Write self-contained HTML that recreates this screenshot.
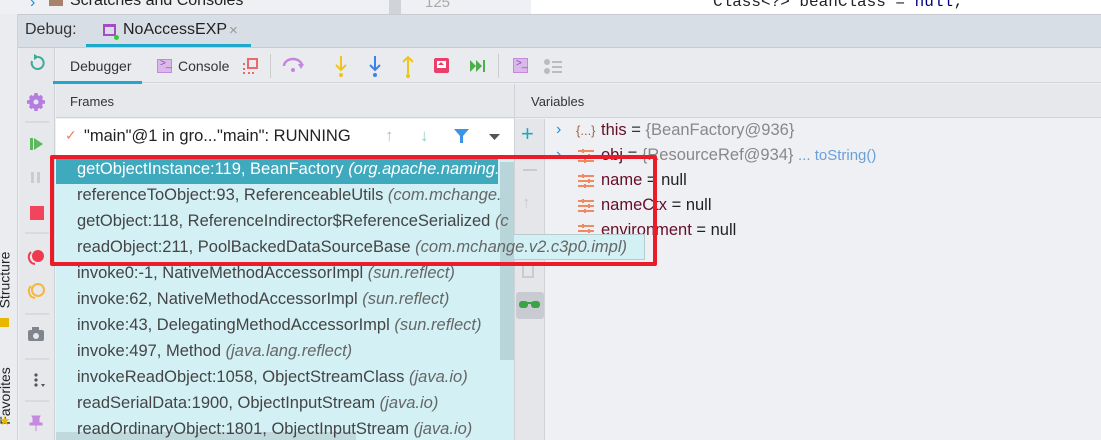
<!DOCTYPE html>
<html><head><meta charset="utf-8"><style>
*{margin:0;padding:0;box-sizing:border-box}
body{width:1101px;height:440px;overflow:hidden;position:relative;background:#eef0f4;font-family:"Liberation Sans",sans-serif;color:#222}
.a{position:absolute}
.t{position:absolute;white-space:nowrap}
.fr{position:absolute;left:21px;font-size:16.5px;color:#444;white-space:nowrap}
.fr i{color:#666}
</style></head><body>
<!-- top strip -->
<div class="a" style="left:0;top:0;width:395px;height:14px;background:#eef0f3"></div>
<div class="t" style="left:30px;top:-6px;font-size:16px;color:#1e8fd6">›</div>
<div class="a" style="left:49px;top:0;width:14px;height:6px;background:#a9826c"></div>
<div class="t" style="left:70px;top:-8px;font-size:16px;color:#222">Scratches and Consoles</div>
<div class="a" style="left:389px;top:0;width:12px;height:14px;background:#d0d3d8"></div>
<div class="a" style="left:401px;top:0;width:130px;height:14px;background:#eef0f3"></div>
<div class="t" style="left:425px;top:-6px;font-size:15px;color:#aaa">125</div>
<div class="a" style="left:531px;top:0;width:570px;height:14px;background:#fff"></div>
<div class="t" style="left:713px;top:-7px;font-size:16px;font-family:'Liberation Mono',monospace;color:#222">Class&lt;?&gt; beanClass = <span style="color:#000080">null</span>;</div>
<!-- debug header -->
<div class="a" style="left:18px;top:14px;width:1083px;height:34px;background:#d8dee6;border-top:1px solid #c8ccd2;border-bottom:1px solid #c8ccd2"></div>
<div class="t" style="left:25px;top:21px;font-size:16px;color:#333">Debug:</div>
<div class="a" style="left:103px;top:24px;width:13px;height:12px;border:2px solid #a64bc8;border-top-width:3px"></div>
<div class="a" style="left:114px;top:35px;width:5px;height:5px;border-radius:50%;background:#3c3"></div>
<div class="t" style="left:123px;top:21px;font-size:16px;color:#222">NoAccessEXP</div>
<div class="t" style="left:229px;top:22px;font-size:15px;color:#999">×</div>
<div class="a" style="left:86px;top:44px;width:165px;height:3px;background:#1ea8cc"></div>
<!-- left strips -->
<div class="a" style="left:0;top:14px;width:18px;height:426px;background:#eaecef;border-right:1px solid #d0d3d8"></div>
<div class="t" style="left:-24px;top:272px;font-size:14px;transform:rotate(-90deg);color:#222">Structure</div>
<div class="a" style="left:0;top:318px;width:9px;height:9px;background:#e8b800"></div>
<div class="t" style="left:-24px;top:388px;font-size:14px;transform:rotate(-90deg);color:#222">Favorites</div>
<div class="t" style="left:-1px;top:413px;font-size:13px;color:#e8b800">★</div>
<div class="a" style="left:19px;top:48px;width:36px;height:392px;background:#e6e8ec;border-right:1px solid #cfd2d7"></div>
<svg class="a" style="left:19px;top:48px" width="36" height="392">
<path d="M13 13 a6 6 0 1 0 6-4" fill="none" stroke="#3aaa99" stroke-width="2"/><path d="M15 6 l5 3 -5 3z" fill="#3aaa99"/>
<g fill="#b57de0"><circle cx="17" cy="54" r="7"/><g stroke="#b57de0" stroke-width="3.5"><line x1="17" y1="45" x2="17" y2="63"/><line x1="8" y1="54" x2="26" y2="54"/><line x1="11" y1="48" x2="23" y2="60"/><line x1="23" y1="48" x2="11" y2="60"/></g></g>
<circle cx="17" cy="54" r="2.5" fill="#e6e8ec"/>
<line x1="6" y1="74" x2="30" y2="74" stroke="#c8cbd0"/>
<rect x="11" y="90" width="3" height="12" fill="#5cb85c"/><path d="M15 90 l9 6 -9 6z" fill="#5cb85c"/>
<rect x="12" y="124" width="3" height="11" fill="#ccc"/><rect x="18" y="124" width="3" height="11" fill="#ccc"/>
<rect x="11" y="158" width="14" height="14" fill="#f0455c"/>
<line x1="6" y1="185" x2="30" y2="185" stroke="#c8cbd0"/>
<circle cx="19" cy="208" r="6" fill="#ee3b4f"/><path d="M12 204 a7 7 0 0 0 4 12" fill="none" stroke="#ee3b4f" stroke-width="2"/>
<circle cx="19" cy="242" r="6" fill="none" stroke="#f4b740" stroke-width="2"/><path d="M12 238 a7 7 0 0 0 4 12" fill="none" stroke="#f4b740" stroke-width="2"/>
<line x1="6" y1="266" x2="30" y2="266" stroke="#c8cbd0"/>
<rect x="9" y="282" width="16" height="11" rx="2" fill="#7f858c"/><rect x="13" y="279" width="7" height="4" fill="#7f858c"/><circle cx="17" cy="288" r="3" fill="#e6e8ec"/>
<line x1="6" y1="311" x2="30" y2="311" stroke="#c8cbd0"/>
<circle cx="17" cy="327" r="1.6" fill="#555"/><circle cx="17" cy="332" r="1.6" fill="#555"/><circle cx="17" cy="337" r="1.6" fill="#555"/><path d="M22 336 l4 0 -2 3z" fill="#555"/>
<line x1="6" y1="353" x2="30" y2="353" stroke="#c8cbd0"/>
<path d="M13 368 h8 l-1 2 v5 h3 v2 h-12 v-2 h3 v-5 l-1-2z M17 377 v6" fill="#c58ae0" stroke="#c58ae0"/>
</svg>
<!-- toolbar -->
<div class="a" style="left:56px;top:48px;width:1045px;height:35px;background:#e9ebef;border-bottom:1px solid #d0d3d8"></div>
<div class="t" style="left:70px;top:58px;font-size:14px;color:#333">Debugger</div>
<div class="a" style="left:53px;top:81px;width:89px;height:3px;background:#1ea8cc"></div>
<div class="a" style="left:157px;top:59px;width:15px;height:14px;background:#d9b8ea;border:1px solid #c28ad8"></div>
<div class="t" style="left:160px;top:58px;font-size:10px;color:#8d4ab0">&gt;_</div>
<div class="t" style="left:178px;top:58px;font-size:14px;color:#333">Console</div>
<div class="a" style="left:247px;top:58px;width:11px;height:11px;border:2px solid #e86a6a"></div>
<div class="a" style="left:243px;top:63px;width:11px;height:11px;border-left:2px dotted #e86a6a;border-bottom:2px dotted #e86a6a"></div>
<div class="a" style="left:270px;top:54px;width:1px;height:24px;background:#ccc"></div>
<svg class="a" style="left:280px;top:52px" width="240" height="28">
<path d="M4 14 a9 7 0 0 1 18 0" fill="none" stroke="#c386e0" stroke-width="2.5"/><path d="M18 12 l6 0 -3 5z" fill="#c386e0"/><circle cx="13" cy="18" r="2" fill="#c386e0"/>
<path d="M61 4 v14 M56 13 l5 5 5-5" fill="none" stroke="#f2c418" stroke-width="2"/><circle cx="61" cy="23" r="2" fill="#f2c418"/>
<path d="M95 4 v14 M90 13 l5 5 5-5" fill="none" stroke="#3a84e8" stroke-width="2"/><circle cx="95" cy="23" r="2" fill="#3a84e8"/>
<path d="M128 22 v-16 M123 10 l5-5 5 5" fill="none" stroke="#f2c418" stroke-width="2"/><circle cx="128" cy="24" r="2" fill="#f2c418"/>
<rect x="154" y="6" width="15" height="15" rx="2" fill="#ea3f6a"/><rect x="157" y="9" width="9" height="7" fill="#fff"/><path d="M161 10 l3 3 h-6z" fill="#ea3f6a"/>
<path d="M190 8 l6 6 -6 6z M196 8 l6 6 -6 6z" fill="#4cae4c"/><rect x="203" y="8" width="2" height="12" fill="#4cae4c"/>
</svg>
<div class="a" style="left:498px;top:54px;width:1px;height:24px;background:#ccc"></div>
<div class="a" style="left:513px;top:58px;width:15px;height:15px;background:#d9b8ea;border:1px solid #c28ad8"></div>
<div class="t" style="left:516px;top:58px;font-size:10px;color:#8d4ab0">&gt;_</div>
<svg class="a" style="left:543px;top:58px" width="22" height="18"><circle cx="4" cy="4" r="3" fill="#bbb"/><circle cx="4" cy="13" r="3" fill="#bbb"/><rect x="9" y="3" width="10" height="2" fill="#bbb"/><rect x="9" y="8" width="10" height="2" fill="#bbb"/><rect x="9" y="13" width="10" height="2" fill="#bbb"/></svg>
<!-- frames header -->
<div class="a" style="left:56px;top:84px;width:1045px;height:34px;background:#e6e8ec;border-bottom:1px solid #d0d3d8"></div>
<div class="t" style="left:70px;top:94px;font-size:13px;color:#333">Frames</div>
<div class="a" style="left:514px;top:84px;width:1px;height:356px;background:#cfd2d7"></div>
<div class="t" style="left:531px;top:94px;font-size:13px;color:#333">Variables</div>
<!-- thread row -->
<div class="a" style="left:56px;top:119px;width:458px;height:36px;background:#fff"></div>
<div class="t" style="left:65px;top:127px;font-size:14px;color:#f08060">✓</div>
<div class="t" style="left:84px;top:127px;font-size:16.5px;color:#222">"main"@1 in gro..."main": RUNNING</div>
<div class="t" style="left:385px;top:126px;font-size:17px;color:#bbb">↑</div>
<div class="t" style="left:420px;top:126px;font-size:17px;color:#8fcfc8">↓</div>
<svg class="a" style="left:453px;top:128px" width="18" height="16"><path d="M1 1 h15 l-6 7 v7 h-3 v-7z" fill="#3a94e8"/></svg>
<svg class="a" style="left:488px;top:133px" width="14" height="8"><path d="M1 1 h11 l-5.5 6z" fill="#555"/></svg>
<!-- frames list -->
<div class="a" style="left:56px;top:155px;width:458px;height:285px;background:#d3f0f5;overflow:hidden">
<div class="a" style="left:0;top:3px;width:442px;height:26px;background:#3fa9bd"></div>
<div class="a" style="left:444px;top:7px;width:14px;height:198px;background:#b8d6da"></div>
<div class="a" style="left:0;top:277px;width:300px;height:8px;background:#bfd9dd"></div>
<div class="fr" style="top:5px;color:#fff">getObjectInstance:119, BeanFactory <i style="color:#fff">(org.apache.naming.</i></div>
<div class="fr" style="top:31px">referenceToObject:93, ReferenceableUtils <i>(com.mchange.</i></div>
<div class="fr" style="top:57px">getObject:118, ReferenceIndirector$ReferenceSerialized <i>(c</i></div>
<div class="fr" style="top:83px">readObject:211, PoolBackedDataSourceBase <i>(com.mchange.v2.c3p0.impl)</i></div>
<div class="fr" style="top:109px">invoke0:-1, NativeMethodAccessorImpl <i>(sun.reflect)</i></div>
<div class="fr" style="top:135px">invoke:62, NativeMethodAccessorImpl <i>(sun.reflect)</i></div>
<div class="fr" style="top:161px">invoke:43, DelegatingMethodAccessorImpl <i>(sun.reflect)</i></div>
<div class="fr" style="top:187px">invoke:497, Method <i>(java.lang.reflect)</i></div>
<div class="fr" style="top:213px">invokeReadObject:1058, ObjectStreamClass <i>(java.io)</i></div>
<div class="fr" style="top:239px">readSerialData:1900, ObjectInputStream <i>(java.io)</i></div>
<div class="fr" style="top:265px">readOrdinaryObject:1801, ObjectInputStream <i>(java.io)</i></div>
</div>
<!-- variable side buttons -->
<div class="a" style="left:515px;top:119px;width:30px;height:321px;background:#e4e6ea;border-right:1px solid #d0d3d8"></div>
<div class="t" style="left:521px;top:121px;font-size:22px;color:#1fa8c0">+</div>
<div class="a" style="left:523px;top:169px;width:14px;height:2px;background:#c8cbd0"></div>
<div class="t" style="left:522px;top:193px;font-size:17px;color:#c8cbd0">↑</div>
<div class="a" style="left:522px;top:264px;width:12px;height:14px;border:2px solid #c8cbd0"></div>
<div class="a" style="left:516px;top:292px;width:28px;height:27px;background:#c8cbd1;border-radius:3px"></div>
<svg class="a" style="left:518px;top:298px" width="24" height="12"><rect x="1" y="3" width="9" height="7" rx="3" fill="#3aa345"/><rect x="13" y="3" width="9" height="7" rx="3" fill="#3aa345"/><rect x="9" y="4" width="5" height="2" fill="#3aa345"/></svg>
<!-- variables -->
<div class="t" style="left:556px;top:121px;font-size:16px;color:#1e8fd6">›</div>
<div class="t" style="left:576px;top:123px;font-size:13px;color:#a0644a">{...}</div>
<div class="t" style="left:601px;top:121px;font-size:16.5px;color:#660e26">this <span style="color:#333">=</span> <span style="color:#888">{BeanFactory@936}</span></div>
<div class="t" style="left:556px;top:146px;font-size:16px;color:#1e8fd6">›</div>
<div class="t" style="left:601px;top:146px;font-size:16.5px;color:#660e26">obj <span style="color:#333">=</span> <span style="color:#888">{ResourceRef@934}</span> <span style="color:#6aa0d8;font-size:15px">... toString()</span></div>
<svg class="a" style="left:577px;top:147px" width="18" height="100"><g stroke="#f08a60" stroke-width="2"><path d="M1 4h16M1 9h16M1 14h16M6 2v4M12 7v4M8 12v4"/><path d="M1 29h16M1 34h16M1 39h16M6 27v4M12 32v4M8 37v4"/><path d="M1 54h16M1 59h16M1 64h16M6 52v4M12 57v4M8 62v4"/><path d="M1 79h16M1 84h16M1 89h16M6 77v4M12 82v4M8 87v4"/></g></svg>
<div class="t" style="left:601px;top:171px;font-size:16.5px;color:#660e26">name <span style="color:#222">= null</span></div>
<div class="t" style="left:601px;top:196px;font-size:16.5px;color:#660e26">nameCtx <span style="color:#222">= null</span></div>
<div class="t" style="left:601px;top:221px;font-size:16.5px;color:#660e26">environment <span style="color:#222">= null</span></div>
<!-- tooltip -->
<div class="a" style="left:514px;top:234px;width:131px;height:26px;background:#d3f0f5;border:1px solid #b8ccd0;border-left:none;overflow:hidden">
<div class="t" style="left:-437px;top:3px;font-size:16.5px;color:#444">readObject:211, PoolBackedDataSourceBase <i style="color:#666">(com.mchange.v2.c3p0.impl)</i></div>
</div>
<!-- red highlight -->
<div class="a" style="left:50px;top:155px;width:607px;height:111px;border:4px solid #ea1c2a;border-radius:2px"></div>
</body></html>
